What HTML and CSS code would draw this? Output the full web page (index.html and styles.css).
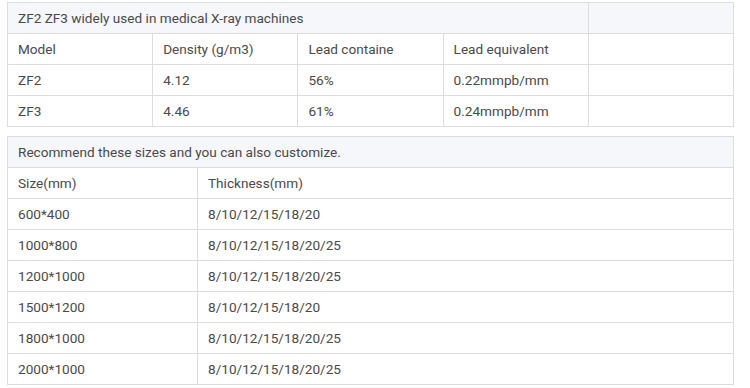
FILE: index.html
```html
<!DOCTYPE html>
<html>
<head>
<meta charset="utf-8">
<link rel="stylesheet" href="styles.css">
</head>
<body>
<div class="page">
  <table class="spec spec-props">
    <colgroup><col><col><col><col><col></colgroup>
    <tr class="head"><td colspan="4">ZF2 ZF3 widely used in medical X-ray machines</td><td></td></tr>
    <tr><td>Model</td><td>Density (g/m3)</td><td>Lead containe</td><td>Lead equivalent</td><td></td></tr>
    <tr><td>ZF2</td><td>4.12</td><td>56%</td><td>0.22mmpb/mm</td><td></td></tr>
    <tr><td>ZF3</td><td>4.46</td><td>61%</td><td>0.24mmpb/mm</td><td></td></tr>
  </table>
  <table class="spec spec-sizes">
    <colgroup><col class="c-size"><col></colgroup>
    <tr class="head"><td colspan="2">Recommend these sizes and you can also customize.</td></tr>
    <tr><td>Size(mm)</td><td>Thickness(mm)</td></tr>
    <tr><td>600*400</td><td>8/10/12/15/18/20</td></tr>
    <tr><td>1000*800</td><td>8/10/12/15/18/20/25</td></tr>
    <tr><td>1200*1000</td><td>8/10/12/15/18/20/25</td></tr>
    <tr><td>1500*1200</td><td>8/10/12/15/18/20</td></tr>
    <tr><td>1800*1000</td><td>8/10/12/15/18/20/25</td></tr>
    <tr><td>2000*1000</td><td>8/10/12/15/18/20/25</td></tr>
  </table>
</div>
</body>
</html>
```
FILE: styles.css
```css
html, body {
  margin: 0;
  padding: 0;
  background: #fff;
}
.page {
  padding: 2px 0 0 7px;
  display: flex;
  flex-direction: column;
  gap: 9px;
  align-items: flex-start;
}
.spec {
  width: 727px;
  border-collapse: collapse;
  table-layout: fixed;
  font-family: Roboto, "Liberation Sans", sans-serif;
  font-size: 13.6px;
  color: #4a4a4a;
}
.spec td {
  border: 1px solid #ddd;
  height: 31px;
  padding: 0 10px;
  box-sizing: border-box;
  white-space: nowrap;
  overflow: hidden;
  vertical-align: middle;
}
.spec tr.head td {
  background: #f5f7fa;
}
.spec-sizes .c-size {
  width: 190px;
}
```
